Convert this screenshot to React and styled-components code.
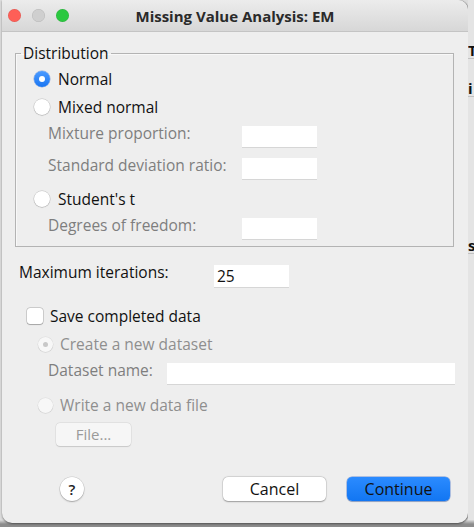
import React from 'react'
import styled, { createGlobalStyle } from 'styled-components'

const GlobalStyle = createGlobalStyle`
  html, body {
    margin: 0;
    padding: 0;
    width: 474px;
    height: 527px;
    overflow: hidden;
    background: #9a9a9a;
  }
  body {
    font-family: 'Open Sans', 'DejaVu Sans', sans-serif;
    color: #1a1a1a;
  }
`

export default function App () {
  return (
    <Desktop>
      <GlobalStyle />
      <Window>
        <TitleBar>
          <Lights>
            <Light $color='#fe5f57' />
            <Light $color='#cfcfcf' />
            <Light $color='#2bc840' />
          </Lights>
          <Title>Missing Value Analysis: EM</Title>
        </TitleBar>

        <Body>
          <Group>
            <Legend>Distribution</Legend>
            <Row $mt={5} $h={22} $pl={18}>
              <Radio $checked />
              <Label>Normal</Label>
            </Row>
            <Row $mt={6} $h={22} $pl={18}>
              <Radio />
              <Label>Mixed normal</Label>
            </Row>
            <Row $mt={8} $h={21} $pl={32}>
              <SubLabel $w={194}>Mixture proportion:</SubLabel>
              <Field $w={75} />
            </Row>
            <Row $mt={11} $h={21} $pl={32}>
              <SubLabel $w={194}>Standard deviation ratio:</SubLabel>
              <Field $w={75} />
            </Row>
            <Row $mt={9} $h={22} $pl={18}>
              <Radio />
              <Label>Student's t</Label>
            </Row>
            <Row $mt={8} $h={21} $pl={32}>
              <SubLabel $w={194}>Degrees of freedom:</SubLabel>
              <Field $w={75} />
            </Row>
          </Group>

          <Row $mt={18} $h={22} $pl={4}>
            <SubLabel $w={195} $dark>Maximum iterations:</SubLabel>
            <Field $w={75}>25</Field>
          </Row>

          <Row $mt={18} $h={22} $pl={12}>
            <Checkbox />
            <Label>Save completed data</Label>
          </Row>
          <Row $mt={6} $h={22} $pl={23}>
            <SmallRadio $checked />
            <Label $muted>Create a new dataset</Label>
          </Row>
          <Row $mt={8} $h={21} $pl={33}>
            <SubLabel $w={119}>Dataset name:</SubLabel>
            <Field $w={288} />
          </Row>
          <Row $mt={10} $h={22} $pl={23}>
            <SmallRadio />
            <Label $muted>Write a new data file</Label>
          </Row>
          <Row $mt={7} $h={23} $pl={41}>
            <FileButton>File...</FileButton>
          </Row>

          <Footer>
            <HelpButton>?</HelpButton>
            <Buttons>
              <Button>Cancel</Button>
              <Button $primary>Continue</Button>
            </Buttons>
          </Footer>
        </Body>
      </Window>
      <Behind>
        <BehindRow $top={42}>T</BehindRow>
        <BehindRow $top={21}>i</BehindRow>
        <BehindRow $top={140}>s</BehindRow>
      </Behind>
    </Desktop>
  )
}

const Desktop = styled.div`
  display: flex;
  align-items: flex-start;
  width: 474px;
  height: 527px;
  background: linear-gradient(#dcdcdc 0, #dcdcdc 520px, #8c8c8c 524px);
`

const Window = styled.div`
  width: 466px;
  height: 523px;
  margin-left: 2px;
  background: #eeeeee;
  border-radius: 0 10px 10px 10px;
  box-shadow: 0 1px 2px rgba(0, 0, 0, .45), 1px 0 1px rgba(0, 0, 0, .25);
  display: flex;
  flex-direction: column;
  overflow: hidden;
`

const TitleBar = styled.div`
  height: 31px;
  flex: none;
  display: grid;
  grid-template-columns: 1fr auto 1fr;
  align-items: center;
  background: linear-gradient(#ececec, #d7d7d7);
  border-bottom: 1px solid #c4c4c4;
  border-top-right-radius: 10px;
`

const Lights = styled.div`
  display: flex;
  gap: 11px;
  padding-left: 6px;
`

const Light = styled.span`
  width: 13px;
  height: 13px;
  border-radius: 50%;
  background: ${p => p.$color};
  box-shadow: inset 0 0 0 .5px rgba(0, 0, 0, .12);
`

const Title = styled.div`
  font-weight: 700;
  font-size: 15px;
  color: #2a2a2a;
  white-space: nowrap;
`

const Body = styled.div`
  flex: 1;
  display: flex;
  flex-direction: column;
  padding: 11px 14px 0 13px;
`

const Group = styled.fieldset`
  margin: 0;
  padding: 0 0 7px 0;
  border: 1px solid #b3b3b3;
  box-shadow: inset 1px 1px 0 #f8f8f8;
  display: flex;
  flex-direction: column;
  min-width: 0;
`

const Legend = styled.legend`
  margin-left: 5px;
  padding: 0 2px;
  font-size: 15.5px;
  line-height: 20px;
  color: #111;
`

const Row = styled.div`
  display: flex;
  align-items: center;
  height: ${p => p.$h}px;
  margin-top: ${p => p.$mt}px;
  padding-left: ${p => p.$pl}px;
  flex: none;
`

const Label = styled.span`
  font-size: 15.5px;
  line-height: 20px;
  color: ${p => (p.$muted ? '#8e8e8e' : '#111')};
  white-space: nowrap;
`

const SubLabel = styled.span`
  width: ${p => p.$w}px;
  flex: none;
  font-size: 15.5px;
  line-height: 20px;
  padding-bottom: 8px;
  color: ${p => (p.$dark ? '#111' : '#7e7e7e')};
  white-space: nowrap;
`

const Radio = styled.span`
  width: 16px;
  height: 16px;
  border-radius: 50%;
  margin-right: 8px;
  flex: none;
  box-sizing: border-box;
  display: flex;
  align-items: center;
  justify-content: center;
  background: ${p => (p.$checked ? 'linear-gradient(#4c9bff, #1a76f2)' : '#fff')};
  box-shadow: ${p => (p.$checked
    ? '0 0 0 .5px rgba(0, 60, 180, .4)'
    : '0 0 0 .5px rgba(0, 0, 0, .18), 0 .5px 1px rgba(0, 0, 0, .2)')};

  &::after {
    content: '';
    display: ${p => (p.$checked ? 'block' : 'none')};
    width: 6px;
    height: 6px;
    border-radius: 50%;
    background: #fff;
  }
`

const SmallRadio = styled(Radio)`
  width: 15px;
  height: 15px;
  margin-right: 7px;
  background: #f7f7f7;
  box-shadow: 0 0 0 .5px rgba(0, 0, 0, .08), 0 .5px 1px rgba(0, 0, 0, .08);

  &::after {
    width: 5px;
    height: 5px;
    background: #c8c8c8;
  }
`

const Checkbox = styled.span`
  width: 16px;
  height: 16px;
  border-radius: 3px;
  margin-right: 7px;
  flex: none;
  background: #fff;
  box-shadow: 0 0 0 .5px rgba(0, 0, 0, .25), 0 .5px 1px rgba(0, 0, 0, .2);
`

const Field = styled.div`
  width: ${p => p.$w}px;
  height: 100%;
  flex: none;
  box-sizing: border-box;
  background: #fff;
  box-shadow: 0 1px 0 #d6d6d6;
  font-size: 15.5px;
  line-height: 22px;
  padding-left: 3px;
  color: #111;
`

const FileButton = styled.div`
  width: 75px;
  height: 23px;
  box-sizing: border-box;
  border-radius: 4px;
  background: #f6f6f6;
  box-shadow: 0 0 0 .5px rgba(0, 0, 0, .08), 0 .5px 1px rgba(0, 0, 0, .12);
  font-size: 15px;
  line-height: 23px;
  text-align: center;
  color: #9a9a9a;
`

const Footer = styled.div`
  margin-top: 31px;
  height: 24px;
  display: flex;
  align-items: center;
  padding-left: 45px;
  padding-right: 4px;
`

const HelpButton = styled.div`
  width: 24px;
  height: 24px;
  border-radius: 50%;
  background: #fff;
  box-shadow: 0 0 0 .5px rgba(0, 0, 0, .15), 0 1px 1.5px rgba(0, 0, 0, .25);
  font-size: 15px;
  font-weight: 600;
  line-height: 24px;
  text-align: center;
  color: #222;
`

const Buttons = styled.div`
  margin-left: auto;
  display: flex;
  gap: 21px;
`

const Button = styled.div`
  width: 103px;
  height: 24px;
  border-radius: 5px;
  font-size: 16px;
  line-height: 24px;
  text-align: center;
  color: #111;
  background: ${p => (p.$primary ? 'linear-gradient(#2b8bff, #1276f2)' : '#fff')};
  box-shadow: ${p => (p.$primary
    ? '0 0 0 .5px rgba(0, 70, 200, .5), 0 .5px 1px rgba(0, 0, 0, .2)'
    : '0 0 0 .5px rgba(0, 0, 0, .12), 0 .5px 1.5px rgba(0, 0, 0, .3)')};
`

const Behind = styled.div`
  flex: 1;
  height: 520px;
  background: #e4e4e4;
  display: flex;
  flex-direction: column;
  font-family: 'Open Sans', sans-serif;
  font-size: 15px;
  font-weight: 700;
  line-height: 16px;
  overflow: hidden;
`

const BehindRow = styled.div`
  margin-top: ${p => p.$top}px;
  border-bottom: 1px solid #c2c2c2;
  color: #111;
`
